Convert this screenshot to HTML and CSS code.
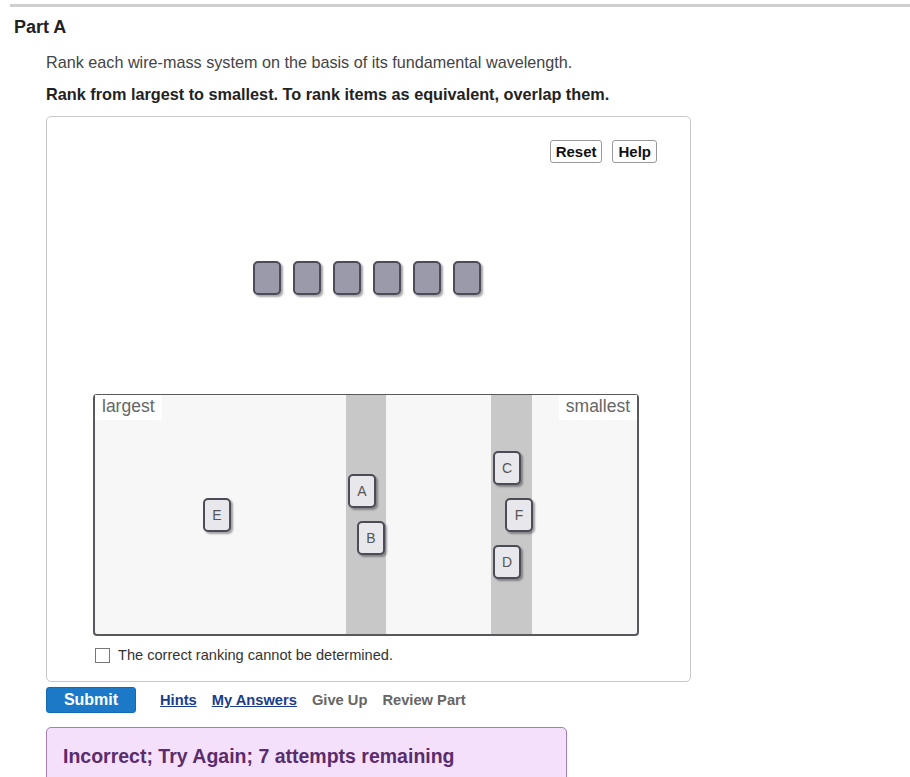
FILE: index.html
```html
<!DOCTYPE html>
<html lang="en">
<head>
    <meta charset="UTF-8">
    <meta name="viewport" content="width=device-width, initial-scale=1.0">
    <title>Part A</title>
    <link rel="stylesheet" href="styles.css">
</head>
<body>
    <div class="topline"></div>
    <h2 class="part-title">Part A</h2>

    <div class="part-body">
        <p class="question">Rank each wire-mass system on the basis of its fundamental wavelength.</p>
        <p class="instructions">Rank from largest to smallest. To rank items as equivalent, overlap them.</p>

        <div class="rank-box">
            <div class="toolbar">
                <button type="button" class="tool-btn">Reset</button>
                <button type="button" class="tool-btn">Help</button>
            </div>

            <div class="tray">
                <div class="tile empty"></div>
                <div class="tile empty"></div>
                <div class="tile empty"></div>
                <div class="tile empty"></div>
                <div class="tile empty"></div>
                <div class="tile empty"></div>
            </div>

            <div class="rank-area">
                <div class="bin bin-1"></div>
                <div class="bin bin-2"></div>
                <span class="end-label largest">largest</span>
                <span class="end-label smallest">smallest</span>

                <div class="tile placed" style="left: 108px; top: 103px;">E</div>
                <div class="tile placed" style="left: 253px; top: 79px;">A</div>
                <div class="tile placed" style="left: 262px; top: 126px;">B</div>
                <div class="tile placed" style="left: 398px; top: 56px;">C</div>
                <div class="tile placed" style="left: 410px; top: 103px;">F</div>
                <div class="tile placed" style="left: 398px; top: 150px;">D</div>
            </div>

            <label class="cannot">
                <span class="check"></span>
                The correct ranking cannot be determined.
            </label>
        </div>

        <div class="actions">
            <button type="button" class="btn-submit">Submit</button>
            <a href="#" class="link">Hints</a>
            <a href="#" class="link">My Answers</a>
            <span class="link-off">Give Up</span>
            <span class="link-off">Review Part</span>
        </div>

        <div class="feedback">Incorrect; Try Again; 7 attempts remaining</div>
    </div>
</body>
</html>
```

FILE: styles.css
```css
body {
    font-family: "Liberation Sans", Arial, sans-serif;
    margin: 0;
    color: #333;
    background: #fff;
    overflow: hidden;
}

.topline {
    height: 3px;
    background-color: #cfcfcf;
    margin: 4px 0 0 10px;
}

.part-title {
    font-size: 18px;
    line-height: 20px;
    font-weight: bold;
    color: #222;
    margin: 10px 0 0 14px;
}

.part-body {
    padding-left: 46px;
}

.question {
    font-size: 16.2px;
    line-height: 18px;
    color: #444;
    margin: 16px 0 0 0;
}

.instructions {
    font-size: 16.25px;
    line-height: 18px;
    font-weight: bold;
    color: #222;
    margin: 14px 0 0 0;
}

.rank-box {
    width: 643px;
    height: 564px;
    margin-top: 13px;
    border: 1px solid #c8c8c8;
    border-radius: 5px;
    display: flex;
    flex-direction: column;
}

.toolbar {
    display: flex;
    justify-content: flex-end;
    gap: 10px;
    padding: 23px 33px 0 0;
}

.tool-btn {
    font-family: inherit;
    font-size: 15px;
    font-weight: bold;
    color: #111;
    background: #fff;
    border: 1px solid #999;
    border-radius: 3px;
    padding: 0 5px;
    height: 23px;
}

.tray {
    display: flex;
    justify-content: center;
    gap: 12px;
    margin-top: 98px;
    padding-right: 4px;
}

.tile {
    width: 24px;
    height: 30px;
    border: 2px solid #4c4c58;
    border-radius: 5px;
    box-shadow: 2px 2px 2px rgba(0, 0, 0, 0.35);
    box-sizing: content-box;
}

.tile.empty {
    background-color: #9a9aab;
}

.tile.placed {
    position: absolute;
    background-color: #e8e8ec;
    color: #555;
    font-size: 14px;
    display: flex;
    align-items: center;
    justify-content: center;
}

.rank-area {
    position: relative;
    flex-shrink: 0;
    width: 542px;
    height: 239px;
    margin: 99px 0 0 46px;
    background-color: #f7f7f7;
    border: 2px solid #58585e;
    border-top-width: 1px;
    border-radius: 4px;
}

.bin {
    position: absolute;
    top: 0;
    bottom: 0;
    width: 40px;
    background-color: #c8c8c8;
}

.bin-1 {
    left: 251px;
}

.bin-2 {
    left: 396px;
    width: 41px;
}

.end-label {
    position: absolute;
    top: 0;
    height: 25px;
    line-height: 22px;
    padding: 0 7px;
    font-size: 17.5px;
    color: #666;
    background: #fff;
}

.largest {
    left: 0;
}

.smallest {
    right: 0;
}

.cannot {
    display: flex;
    align-items: center;
    gap: 8px;
    margin: 11px 0 0 48px;
    font-size: 14.6px;
    color: #333;
}

.check {
    width: 13px;
    height: 13px;
    border: 1px solid #777;
    background: #fff;
}

.actions {
    display: flex;
    align-items: center;
    margin-top: 5px;
    font-size: 14.7px;
    font-weight: bold;
}

.btn-submit {
    font-family: inherit;
    font-size: 16px;
    font-weight: bold;
    color: #fff;
    background-color: #1b79c8;
    border: 1px solid #136ab3;
    border-radius: 3px;
    width: 90px;
    height: 26px;
    margin-right: 24px;
}

.link {
    color: #1a3c8c;
    text-decoration: underline;
    margin-right: 15px;
}

.link-off {
    color: #666;
    margin-right: 15px;
}

.feedback {
    width: 487px;
    margin-top: 14px;
    padding: 17px 16px 30px 16px;
    background-color: #f5e0fc;
    border: 1px solid #a77db9;
    border-radius: 5px;
    font-size: 19.5px;
    font-weight: bold;
    color: #5a2c6c;
}
```
